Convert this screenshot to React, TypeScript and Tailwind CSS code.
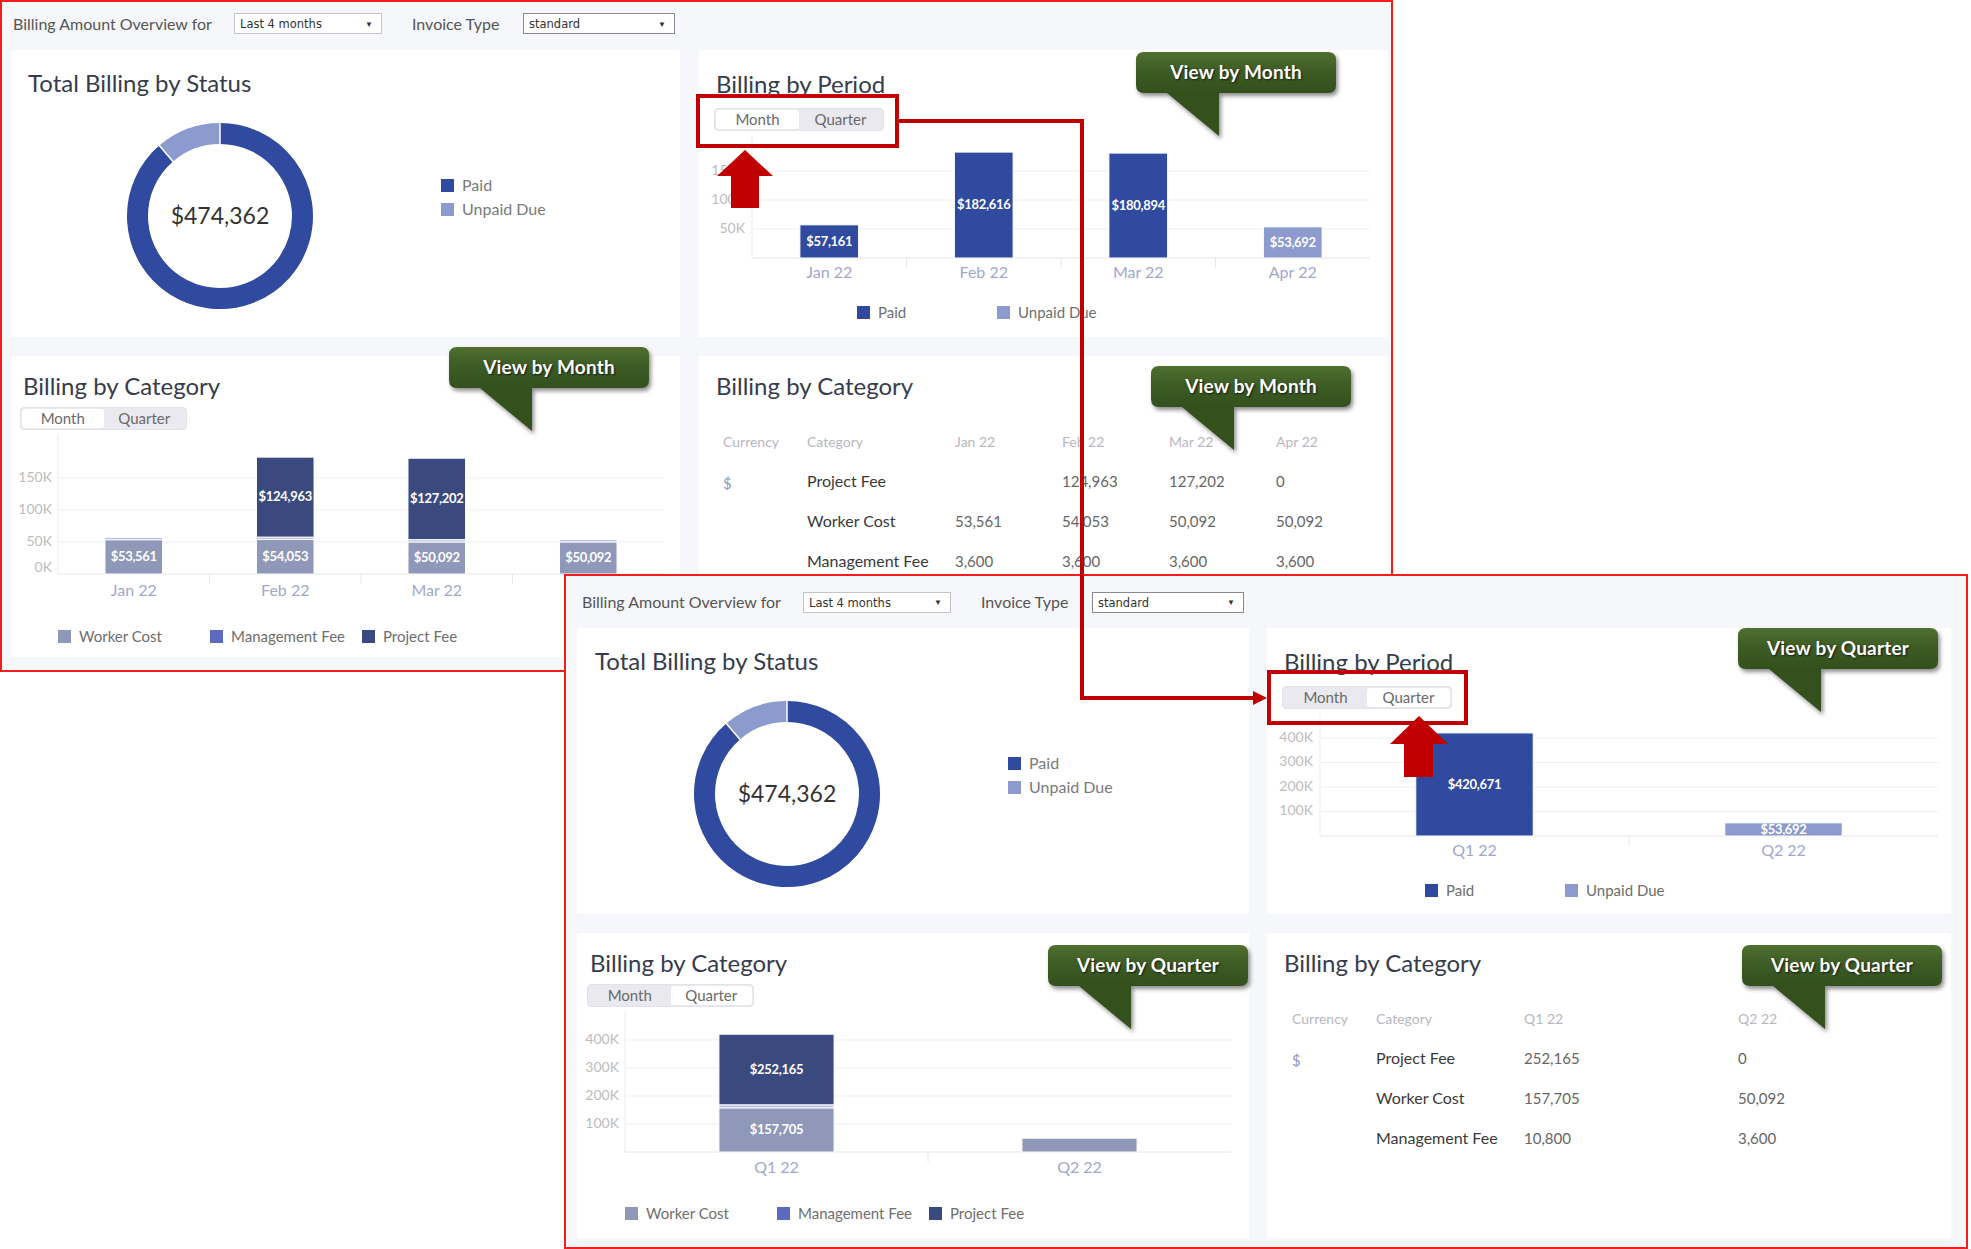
import { useId } from 'react'

const PAID = '#2f4a9f'
const UNPAID = '#8c9ace'
const WC = '#8f98b9'
const MF_BAR = '#b3bbdf'
const PF = '#3b4a7e'

type Seg = { v: number; color: string; label?: string }
type Cat = { name: string; segs: Seg[] }
type Tick = { v: number; label: string; dy?: number; line?: boolean }

function Dropdown({ value, className }: { value: string; className: string }) {
  return (
    <div className={`h-[21px] shrink-0 border bg-white flex items-center justify-between pl-[5px] pr-[8px] ${className}`}>
      <span className="font-['DejaVu_Sans',sans-serif] text-[11.5px] text-[#333] leading-none pt-[3px]">{value}</span>
      <span className="text-[8px] text-[#333] leading-none">▼</span>
    </div>
  )
}

function FilterBar({ className }: { className: string }) {
  return (
    <div className={`flex items-center text-[16px] text-[#555] ${className}`}>
      <span className="w-[221px] shrink-0">Billing Amount Overview for</span>
      <Dropdown value="Last 4 months" className="w-[148px] border-[#c4c4c4]" />
      <span className="ml-[30px] w-[111px] shrink-0">Invoice Type</span>
      <Dropdown value="standard" className="w-[152px] border-[#8a8a8a]" />
    </div>
  )
}

function Title({ children, className }: { children: string; className: string }) {
  return <h2 className={`text-[24px] leading-[28px] text-[#363c4c] ${className}`}>{children}</h2>
}

function Toggle({ quarter, className }: { quarter: boolean; className: string }) {
  const on = 'bg-white'
  return (
    <div className={`h-[23px] flex rounded-[4px] border border-[#e2e2e8] bg-[#e9e9ef] p-[1px] text-[15px] text-[#6a6a6a] leading-none ${className}`}>
      <div className={`flex-1 flex items-center justify-center rounded-[3px] ${quarter ? '' : on}`}>Month</div>
      <div className={`flex-1 flex items-center justify-center rounded-[3px] ${quarter ? on : ''}`}>Quarter</div>
    </div>
  )
}

function Callout({ text, className }: { text: string; className: string }) {
  const gid = 'g' + useId().replace(/[^a-zA-Z0-9]/g, '')
  return (
    <div className={`absolute z-20 w-[206px] h-[92px] pointer-events-none ${className}`}>
      <svg width="206" height="92" className="absolute left-0 top-0 drop-shadow-[2px_3px_2px_rgba(0,0,0,0.45)]">
        <defs>
          <linearGradient id={gid} x1="0" y1="0" x2="0" y2="41" gradientUnits="userSpaceOnUse">
            <stop offset="0" stopColor="#4f7030" />
            <stop offset="0.45" stopColor="#3e5c25" />
            <stop offset="1" stopColor="#33501d" />
          </linearGradient>
        </defs>
        <path
          d="M8,0 H192 Q200,0 200,8 V33 Q200,41 192,41 H83 V84 L31,41 H8 Q0,41 0,33 V8 Q0,0 8,0 Z"
          fill={`url(#${gid})`}
        />
      </svg>
      <div className="absolute left-0 top-0 w-[200px] h-[41px] flex items-center justify-center text-white font-bold text-[19px] tracking-[0.2px] [text-shadow:1px_1px_2px_rgba(0,0,0,0.7)]">
        {text}
      </div>
    </div>
  )
}

function Donut() {
  const cx = 95
  const cy = 95
  const r = 82.5
  const pt = (deg: number, rad = r) => {
    const a = (deg * Math.PI) / 180
    return [cx + rad * Math.sin(a), cy - rad * Math.cos(a)]
  }
  const split = 360 * (1 - 53692 / 474362)
  const [ax, ay] = pt(0)
  const [bx, by] = pt(split)
  return (
    <svg width="190" height="190" className="block">
      <path d={`M${ax},${ay} A${r},${r} 0 1 1 ${bx},${by}`} fill="none" stroke={PAID} strokeWidth={21} />
      <path d={`M${bx},${by} A${r},${r} 0 0 1 ${ax},${ay}`} fill="none" stroke={UNPAID} strokeWidth={21} />
      {[0, split].map(d => {
        const [x1, y1] = pt(d, 71)
        const [x2, y2] = pt(d, 94)
        return <line key={d} x1={x1} y1={y1} x2={x2} y2={y2} stroke="#fff" strokeWidth={1.5} />
      })}
      <text x={cx} y={cy + 2} textAnchor="middle" dominantBaseline="middle" fontSize="23" fill="#333">
        $474,362
      </text>
    </svg>
  )
}

function StatusPanel() {
  return (
    <div className="relative bg-white">
      <Title className="pl-[18px] pt-[19px]">Total Billing by Status</Title>
      <div className="flex mt-[24px]">
        <div className="ml-[115px] w-[190px] h-[190px] shrink-0">
          <Donut />
        </div>
        <div className="ml-[126px] pt-[52px] flex flex-col text-[16px] leading-[24px] text-[#7a7a7a]">
          <div className="flex items-center gap-[8px]">
            <span className="w-[13px] h-[13px] bg-[#2f4a9f]" />
            Paid
          </div>
          <div className="flex items-center gap-[8px]">
            <span className="w-[13px] h-[13px] bg-[#8c9ace]" />
            Unpaid Due
          </div>
        </div>
      </div>
    </div>
  )
}

function BarChart({
  width,
  height,
  base,
  scale,
  ticks,
  plotL,
  plotR,
  labelX,
  xLabelY,
  cats,
}: {
  width: number
  height: number
  base: number
  scale: number
  ticks: Tick[]
  plotL: number
  plotR: number
  labelX: number
  xLabelY: number
  cats: Cat[]
}) {
  const uid = useId().replace(/[^a-zA-Z0-9]/g, '')
  const band = (plotR - plotL) / cats.length
  const bw = band * 0.38
  return (
    <svg width={width} height={height} className="block">
      {ticks.map(t => {
        const y = base - t.v * scale
        return (
          <g key={t.label}>
            {t.line !== false && <line x1={plotL} x2={plotR} y1={y} y2={y} stroke="#efeff3" />}
            <text x={labelX} y={y + (t.dy ?? 0)} textAnchor="end" dominantBaseline="middle" fontSize="14" fill="#bcbcbc">
              {t.label}
            </text>
          </g>
        )
      })}
      <line x1={plotL} x2={plotL} y1={4} y2={base} stroke="#ededf0" />
      <line x1={plotL} x2={plotR} y1={base} y2={base} stroke="#e6e6ea" />
      {cats.slice(1).map((_, i) => {
        const x = plotL + band * (i + 1)
        return <line key={i} x1={x} x2={x} y1={base} y2={base + 10} stroke="#e6e6ea" />
      })}
      {cats.map((c, i) => {
        const cx = plotL + band * (i + 0.5)
        let y0 = base
        return (
          <g key={c.name}>
            {c.segs.map((s, j) => {
              const h = s.v * scale
              const y = y0 - h
              y0 = y
              const id = `${uid}c${i}s${j}`
              return (
                <g key={j}>
                  <rect x={cx - bw / 2} y={y} width={bw} height={h} fill={s.color} stroke="#fff" strokeWidth={1} />
                  {s.label && (
                    <>
                      <clipPath id={id}>
                        <rect x={cx - bw / 2} y={y} width={bw} height={h} />
                      </clipPath>
                      <text
                        x={cx}
                        y={y + h / 2 + 1}
                        clipPath={`url(#${id})`}
                        textAnchor="middle"
                        dominantBaseline="middle"
                        fontSize="13"
                        fontWeight="700"
                        letterSpacing="-0.3"
                        fill="#fff"
                      >
                        {s.label}
                      </text>
                    </>
                  )}
                </g>
              )
            })}
            <text x={cx} y={xLabelY} textAnchor="middle" dominantBaseline="middle" fontSize="16" fill="#a3a6cf">
              {c.name}
            </text>
          </g>
        )
      })}
    </svg>
  )
}

function LegendItem({ color, label, className }: { color: string; label: string; className: string }) {
  return (
    <div className={`flex items-center gap-[8px] shrink-0 ${className}`}>
      <span className={`w-[13px] h-[13px] ${color}`} />
      {label}
    </div>
  )
}

function PeriodPanel({ quarter }: { quarter: boolean }) {
  const cats: Cat[] = quarter
    ? [
        { name: 'Q1 22', segs: [{ v: 420671, color: PAID, label: '$420,671' }] },
        { name: 'Q2 22', segs: [{ v: 53692, color: UNPAID, label: '$53,692' }] },
      ]
    : [
        { name: 'Jan 22', segs: [{ v: 57161, color: PAID, label: '$57,161' }] },
        { name: 'Feb 22', segs: [{ v: 182616, color: PAID, label: '$182,616' }] },
        { name: 'Mar 22', segs: [{ v: 180894, color: PAID, label: '$180,894' }] },
        { name: 'Apr 22', segs: [{ v: 53692, color: UNPAID, label: '$53,692' }] },
      ]
  const ticks: Tick[] = quarter
    ? [
        { v: 100000, label: '100K' },
        { v: 200000, label: '200K' },
        { v: 300000, label: '300K' },
        { v: 400000, label: '400K' },
      ]
    : [
        { v: 50000, label: '50K' },
        { v: 100000, label: '100K' },
        { v: 150000, label: '150K' },
      ]
  return (
    <div className="relative bg-white">
      <Title className="pl-[17px] pt-[20px]">Billing by Period</Title>
      <Toggle quarter={quarter} className="ml-[15px] mt-[10px] w-[170px]" />
      <BarChart
        width={quarter ? 684 : 689}
        height={155}
        base={127}
        scale={quarter ? 0.245 / 1000 : 0.58 / 1000}
        ticks={ticks}
        plotL={53}
        plotR={671}
        labelX={46}
        xLabelY={143}
        cats={cats}
      />
      <div className="flex mt-[16px] pl-[158px] text-[15px] leading-[20px] text-[#6e6e6e]">
        <LegendItem color="bg-[#2f4a9f]" label="Paid" className="w-[140px]" />
        <LegendItem color="bg-[#8c9ace]" label="Unpaid Due" className="w-[140px]" />
      </div>
      {quarter ? (
        <Callout text="View by Quarter" className="left-[471px] top-[0px]" />
      ) : (
        <Callout text="View by Month" className="left-[437px] top-[2px]" />
      )}
    </div>
  )
}

function CategoryChartPanel({ quarter }: { quarter: boolean }) {
  const stack = (wc: number, mf: number, pf: number, wcl?: string, pfl?: string): Seg[] => {
    const s: Seg[] = [
      { v: wc, color: WC, label: wcl },
      { v: mf, color: MF_BAR },
    ]
    if (pf > 0) s.push({ v: pf, color: PF, label: pfl })
    return s
  }
  const cats: Cat[] = quarter
    ? [
        { name: 'Q1 22', segs: stack(157705, 10800, 252165, '$157,705', '$252,165') },
        { name: 'Q2 22', segs: stack(50092, 3600, 0) },
      ]
    : [
        { name: 'Jan 22', segs: stack(53561, 3600, 0, '$53,561') },
        { name: 'Feb 22', segs: stack(54053, 3600, 124963, '$54,053', '$124,963') },
        { name: 'Mar 22', segs: stack(50092, 3600, 127202, '$50,092', '$127,202') },
        { name: 'Apr 22', segs: stack(50092, 3600, 0, '$50,092') },
      ]
  const ticks: Tick[] = quarter
    ? [
        { v: 100000, label: '100K' },
        { v: 200000, label: '200K' },
        { v: 300000, label: '300K' },
        { v: 400000, label: '400K' },
      ]
    : [
        { v: 0, label: '0K', dy: -6, line: false },
        { v: 50000, label: '50K' },
        { v: 100000, label: '100K' },
        { v: 150000, label: '150K' },
      ]
  return (
    <div className="relative bg-white">
      <Title className="pl-[13px] pt-[16px]">Billing by Category</Title>
      <Toggle quarter={quarter} className="ml-[10px] mt-[7px] w-[167px]" />
      <BarChart
        width={quarter ? 672 : 670}
        height={172}
        base={quarter ? 145 : 144}
        scale={quarter ? 0.28 / 1000 : 0.64 / 1000}
        ticks={ticks}
        plotL={48}
        plotR={654}
        labelX={42}
        xLabelY={162}
        cats={cats}
      />
      <div className="flex mt-[24px] pl-[48px] text-[15px] leading-[20px] text-[#6e6e6e]">
        <LegendItem color="bg-[#8f98b9]" label="Worker Cost" className="w-[152px]" />
        <LegendItem color="bg-[#5b6bbd]" label="Management Fee" className="w-[152px]" />
        <LegendItem color="bg-[#3b4a7e]" label="Project Fee" className="w-[152px]" />
      </div>
      {quarter ? (
        <Callout text="View by Quarter" className="left-[471px] top-[12px]" />
      ) : (
        <Callout text="View by Month" className="left-[439px] top-[-9px]" />
      )}
    </div>
  )
}

function CategoryTablePanel({ quarter }: { quarter: boolean }) {
  const head = quarter ? ['Q1 22', 'Q2 22'] : ['Jan 22', 'Feb 22', 'Mar 22', 'Apr 22']
  const rows: [string, string[]][] = quarter
    ? [
        ['Project Fee', ['252,165', '0']],
        ['Worker Cost', ['157,705', '50,092']],
        ['Management Fee', ['10,800', '3,600']],
      ]
    : [
        ['Project Fee', ['', '124,963', '127,202', '0']],
        ['Worker Cost', ['53,561', '54,053', '50,092', '50,092']],
        ['Management Fee', ['3,600', '3,600', '3,600', '3,600']],
      ]
  const cols = quarter
    ? 'grid-cols-[84px_148px_214px_1fr] pl-[25px]'
    : 'grid-cols-[84px_148px_107px_107px_107px_1fr] pl-[24px]'
  return (
    <div className="relative bg-white">
      <Title className="pl-[17px] pt-[16px]">Billing by Category</Title>
      <div className={`grid ${cols} auto-rows-[40px] items-center mt-[21px]`}>
        <span className="text-[14px] text-[#b7b7bf]">Currency</span>
        <span className="text-[14px] text-[#b7b7bf]">Category</span>
        {head.map(h => (
          <span key={h} className="text-[14px] text-[#b7b7bf]">
            {h}
          </span>
        ))}
        {rows.map(([name, vals], i) => (
          <div key={name} className="contents">
            <span className="text-[15px] text-[#8f95c8] pt-[5px]">{i === 0 ? '$' : ''}</span>
            <span className="text-[16px] text-[#3a3a3a] whitespace-nowrap">{name}</span>
            {vals.map((v, j) => (
              <span key={j} className="text-[15px] text-[#666]">
                {v}
              </span>
            ))}
          </div>
        ))}
      </div>
      {quarter ? (
        <Callout text="View by Quarter" className="left-[475px] top-[12px]" />
      ) : (
        <Callout text="View by Month" className="left-[452px] top-[10px]" />
      )}
    </div>
  )
}

function Overlay() {
  const red = '#c00000'
  return (
    <svg width="1971" height="1249" className="absolute left-0 top-0 z-50 pointer-events-none">
      <rect x="698" y="96" width="199" height="50" fill="none" stroke={red} strokeWidth="4" />
      <rect x="1269" y="672" width="197" height="51" fill="none" stroke={red} strokeWidth="4" />
      <polyline points="899,121 1082,121 1082,698 1256,698" fill="none" stroke={red} strokeWidth="4" />
      <polygon points="1253,691 1267,698 1253,705" fill={red} />
      <polygon points="745,150 773,176 759,176 759,208 731,208 731,176 717,176" fill={red} />
      <polygon points="1419,716 1448,744 1433,744 1433,777 1404,777 1404,744 1390,744" fill={red} />
    </svg>
  )
}

export default function App() {
  return (
    <div className="relative w-[1971px] h-[1249px] bg-white overflow-hidden font-[Lato,sans-serif]">
      <div className="absolute left-0 top-0 w-[1393px] h-[672px] border-2 border-[#f41d1d] bg-[#f6f7fb]">
        <FilterBar className="h-[48px] pl-[11px] pb-[5px]" />
        <div className="grid grid-cols-[670px_689px] grid-rows-[287px_301px] gap-x-[19px] gap-y-[19px] pl-[8px]">
          <StatusPanel />
          <PeriodPanel quarter={false} />
          <CategoryChartPanel quarter={false} />
          <CategoryTablePanel quarter={false} />
        </div>
      </div>
      <div className="absolute left-[564px] top-[574px] w-[1404px] h-[675px] border-2 border-[#f41d1d] bg-[#f6f7fb]">
        <FilterBar className="h-[52px] pl-[16px]" />
        <div className="grid grid-cols-[672px_684px] grid-rows-[286px_305px] gap-x-[18px] gap-y-[19px] pl-[11px]">
          <StatusPanel />
          <PeriodPanel quarter />
          <CategoryChartPanel quarter />
          <CategoryTablePanel quarter />
        </div>
      </div>
      <Overlay />
    </div>
  )
}
